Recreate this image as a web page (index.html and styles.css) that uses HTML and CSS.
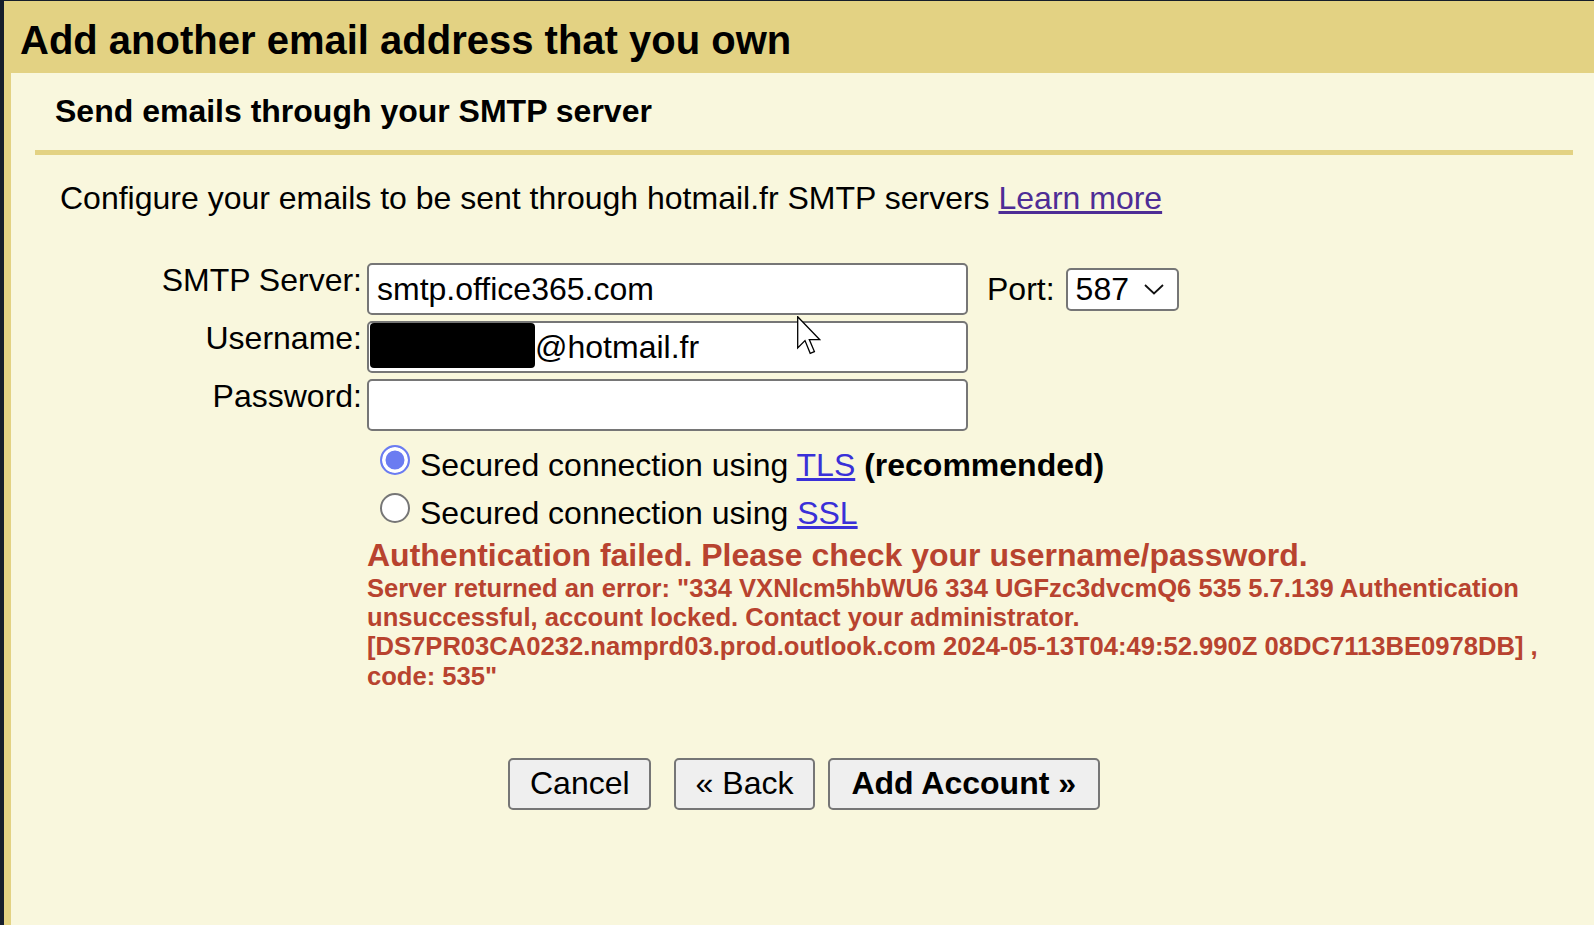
FILE: index.html
```html
<!DOCTYPE html>
<html lang="en">
<head>
<meta charset="utf-8">
<title>Add another email address that you own</title>
<link rel="stylesheet" href="styles.css">
</head>
<body>
<div class="dialog">
  <h1 class="title">Add another email address that you own</h1>
  <div class="panel">
    <h2 class="section-head">Send emails through your SMTP server</h2>
    <p class="desc">Configure your emails to be sent through hotmail.fr SMTP servers <a class="link link-visited" href="#">Learn more</a></p>

    <div class="form">
      <label class="label" for="smtp">SMTP Server:</label>
      <div class="field-row">
        <input class="input" id="smtp" type="text" value="smtp.office365.com">
        <span class="port-label">Port:</span>
        <div class="select" role="combobox" aria-label="Port">
          <span>587</span>
          <svg class="chevron" width="20" height="11" viewBox="0 0 20 11"><path d="M1 1 L10 9.5 L19 1" fill="none" stroke="#111" stroke-width="1.8"/></svg>
        </div>
      </div>

      <label class="label">Username:</label>
      <div class="field-row">
        <div class="input input-user">
          <span class="redact"></span><span>@hotmail.fr</span>
          <svg class="cursor" width="24" height="39" viewBox="0 0 24 39"><path d="M0.7 0.7 L0.7 32 L8 24.6 L13.2 37.3 L17.4 35.6 L12.3 23.6 L22.6 23.6 Z" fill="#fff" stroke="#000" stroke-width="1.3" stroke-linejoin="miter"/></svg>
        </div>
      </div>

      <label class="label" for="pw">Password:</label>
      <div class="field-row">
        <input class="input" id="pw" type="password">
      </div>

      <div class="spacer"></div>
      <div class="options">
        <label class="radio-row"><input class="radio" type="radio" name="sec" checked><span>Secured connection using <a class="link" href="#">TLS</a> <b>(recommended)</b></span></label>
        <label class="radio-row"><input class="radio" type="radio" name="sec"><span>Secured connection using <a class="link" href="#">SSL</a></span></label>
        <div class="error">
          <div class="error-title">Authentication failed. Please check your username/password.</div>
          <div class="error-detail">Server returned an error: "334 VXNlcm5hbWU6 334 UGFzc3dvcmQ6 535 5.7.139 Authentication unsuccessful, account locked. Contact your administrator. [DS7PR03CA0232.namprd03.prod.outlook.com 2024-05-13T04:49:52.990Z 08DC7113BE0978DB] , code: 535"</div>
        </div>
      </div>
    </div>

    <div class="actions">
      <button class="btn btn-cancel" type="button">Cancel</button>
      <button class="btn btn-back" type="button">« Back</button>
      <button class="btn btn-primary" type="button">Add Account »</button>
    </div>
  </div>
</div>
</body>
</html>
```

FILE: styles.css
```css
html, body {
  height: 100%;
}

body {
  margin: 0;
  padding: 1px 0 0 4px;
  box-sizing: border-box;
  background: #161e2b;
  font-family: "Liberation Sans", Arial, sans-serif;
  color: #000;
  overflow: hidden;
}

.dialog {
  background: #e3d283;
  height: 100%;
  display: flex;
  flex-direction: column;
}

.title {
  margin: 0;
  height: 72px;
  box-sizing: border-box;
  padding: 16px 0 0 16px;
  font-size: 40px;
  line-height: 46px;
  font-weight: bold;
  white-space: nowrap;
}

.panel {
  flex: 1;
  margin-left: 7px;
  background: #f9f7dd;
}

.section-head {
  margin: 0 21px 0 24px;
  padding: 20px 0 20px 20px;
  border-bottom: 5px solid #e3d283;
  font-size: 32px;
  line-height: 37px;
  font-weight: bold;
}

.desc {
  margin: 25px 0 0 49px;
  font-size: 32px;
  line-height: 37px;
}

.link {
  color: #3a30d8;
  text-decoration: underline;
}

.link-visited {
  color: #4e2d96;
}

.form {
  margin-top: 43px;
  display: grid;
  grid-template-columns: 351px 1206px;
  column-gap: 5px;
  row-gap: 3px;
  font-size: 32px;
  line-height: 37px;
}

.label {
  text-align: right;
  align-self: start;
  padding-top: 2px;
  white-space: nowrap;
}

.field-row {
  display: flex;
  align-items: center;
  margin-top: 3px;
}

.input {
  box-sizing: border-box;
  width: 601px;
  height: 52px;
  margin: 0;
  padding: 0 8px;
  border: 2px solid #767676;
  border-radius: 5px;
  background: #fff;
  font-family: inherit;
  font-size: 32px;
  color: #000;
  outline: none;
}

.input-user {
  position: relative;
  display: flex;
  align-items: center;
  padding-left: 1px;
  white-space: nowrap;
}

.redact {
  align-self: flex-start;
  width: 165px;
  height: 45px;
  background: #000;
  border-radius: 4px;
  flex: none;
}

.cursor {
  position: absolute;
  left: 428px;
  top: -7px;
  pointer-events: none;
}

.port-label {
  margin-left: 19px;
}

.select {
  margin-left: 11px;
  box-sizing: border-box;
  width: 113px;
  height: 43px;
  padding: 0 13px 0 8px;
  border: 2px solid #767676;
  border-radius: 5px;
  background: #fff;
  display: flex;
  align-items: center;
  justify-content: space-between;
}

.chevron {
  display: block;
}

.options {
  padding-top: 13px;
}

.radio-row {
  display: flex;
  align-items: flex-start;
  white-space: nowrap;
}

.radio-row + .radio-row {
  margin-top: 11px;
}

.radio {
  appearance: none;
  -webkit-appearance: none;
  flex: none;
  box-sizing: border-box;
  width: 30px;
  height: 30px;
  margin: -2px 10px 0 13px;
  border: 2px solid #767676;
  border-radius: 50%;
  background: #fff;
}

.radio:checked {
  border-color: #6b7cf1;
  background: #6b7cf1;
  box-shadow: inset 0 0 0 3.5px #fff;
}

.error {
  margin-top: 5px;
  color: #b8432f;
  font-weight: bold;
}

.error-title {
  font-size: 32px;
  line-height: 37px;
  white-space: nowrap;
}

.error-detail {
  font-size: 25.6px;
  line-height: 29.2px;
}

.actions {
  display: flex;
  justify-content: center;
  margin-top: 67px;
  padding-left: 3px;
}

.btn {
  box-sizing: border-box;
  height: 52px;
  margin: 0;
  padding: 0 19.5px;
  border: 2px solid #767676;
  border-radius: 5px;
  background: #efefef;
  font-family: inherit;
  font-size: 32px;
  color: #000;
}

.btn-cancel {
  margin-right: 23px;
}

.btn-back {
  margin-right: 13px;
}

.btn-primary {
  padding: 0 21.5px;
  font-weight: bold;
}
```
